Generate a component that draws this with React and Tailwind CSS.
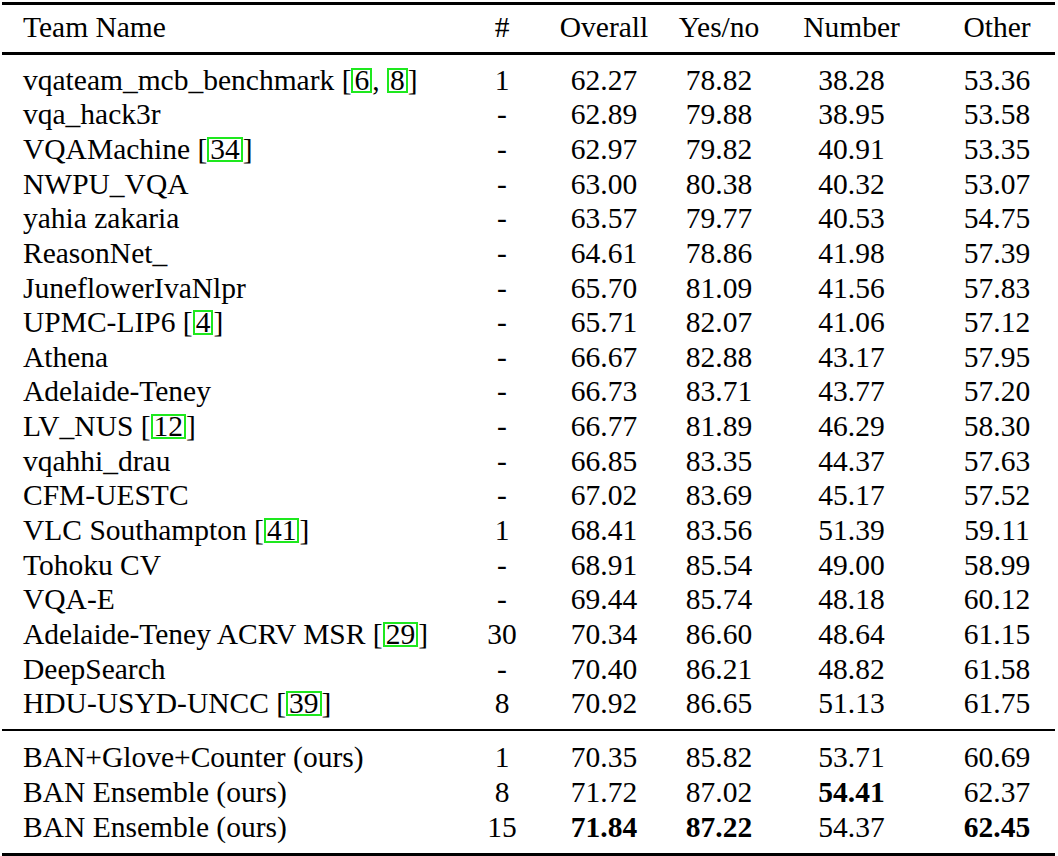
import React from "react";

const rows = [
  { name: "vqateam_mcb_benchmark", cites: ["6", "8"], n: "1", v: ["62.27", "78.82", "38.28", "53.36"] },
  { name: "vqa_hack3r", n: "-", v: ["62.89", "79.88", "38.95", "53.58"] },
  { name: "VQAMachine", cites: ["34"], n: "-", v: ["62.97", "79.82", "40.91", "53.35"] },
  { name: "NWPU_VQA", n: "-", v: ["63.00", "80.38", "40.32", "53.07"] },
  { name: "yahia zakaria", n: "-", v: ["63.57", "79.77", "40.53", "54.75"] },
  { name: "ReasonNet_", n: "-", v: ["64.61", "78.86", "41.98", "57.39"] },
  { name: "JuneflowerIvaNlpr", n: "-", v: ["65.70", "81.09", "41.56", "57.83"] },
  { name: "UPMC-LIP6", cites: ["4"], n: "-", v: ["65.71", "82.07", "41.06", "57.12"] },
  { name: "Athena", n: "-", v: ["66.67", "82.88", "43.17", "57.95"] },
  { name: "Adelaide-Teney", n: "-", v: ["66.73", "83.71", "43.77", "57.20"] },
  { name: "LV_NUS", cites: ["12"], n: "-", v: ["66.77", "81.89", "46.29", "58.30"] },
  { name: "vqahhi_drau", n: "-", v: ["66.85", "83.35", "44.37", "57.63"] },
  { name: "CFM-UESTC", n: "-", v: ["67.02", "83.69", "45.17", "57.52"] },
  { name: "VLC Southampton", cites: ["41"], n: "1", v: ["68.41", "83.56", "51.39", "59.11"] },
  { name: "Tohoku CV", n: "-", v: ["68.91", "85.54", "49.00", "58.99"] },
  { name: "VQA-E", n: "-", v: ["69.44", "85.74", "48.18", "60.12"] },
  { name: "Adelaide-Teney ACRV MSR", cites: ["29"], n: "30", v: ["70.34", "86.60", "48.64", "61.15"] },
  { name: "DeepSearch", n: "-", v: ["70.40", "86.21", "48.82", "61.58"] },
  { name: "HDU-USYD-UNCC", cites: ["39"], n: "8", v: ["70.92", "86.65", "51.13", "61.75"] },
];

const ours = [
  { name: "BAN+Glove+Counter (ours)", n: "1", v: ["70.35", "85.82", "53.71", "60.69"], bold: [] },
  { name: "BAN Ensemble (ours)", n: "8", v: ["71.72", "87.02", "54.41", "62.37"], bold: [2] },
  { name: "BAN Ensemble (ours)", n: "15", v: ["71.84", "87.22", "54.37", "62.45"], bold: [0, 1, 3] },
];

const grid = "grid grid-cols-[468px_64px_140px_90px_175px_116px] items-center";

const Cite = ({ c }) => (
  <span className="inline-block border-2 border-[#1ee81e] leading-[21px] px-[1px]">{c}</span>
);

const Name = ({ row }) => (
  <div className="pl-[21px] whitespace-nowrap">
    {row.name}
    {row.cites && (
      <>
        {" ["}
        {row.cites.map((c, i) => (
          <React.Fragment key={c}>
            {i > 0 && ", "}
            <Cite c={c} />
          </React.Fragment>
        ))}
        {"]"}
      </>
    )}
  </div>
);

const Cell = ({ children, bold }) => (
  <div className={`text-center ${bold ? "font-bold" : ""}`}>{children}</div>
);

const Row = ({ row }) => (
  <div className={`${grid} h-[34.67px]`}>
    <Name row={row} />
    <Cell>{row.n}</Cell>
    {row.v.map((x, i) => (
      <Cell key={i} bold={row.bold && row.bold.includes(i)}>{x}</Cell>
    ))}
  </div>
);

export default function App() {
  return (
    <div className="w-[1058px] h-[856px] bg-white text-black text-[29.5px] leading-none font-['Liberation_Serif'] pt-[2px] pl-[2px]">
      <div className="w-[1053px]">
        <div className="h-[3px] bg-black" />
        <div className={`${grid} h-[47px] pb-[2px]`}>
          <Name row={{ name: "Team Name" }} />
          <Cell>#</Cell>
          <Cell>Overall</Cell>
          <Cell>Yes/no</Cell>
          <Cell>Number</Cell>
          <Cell>Other</Cell>
        </div>
        <div className="h-[3px] bg-black" />
        <div className="pt-[8px] pb-[7.3px]">
          {rows.map((r, i) => (
            <Row key={i} row={r} />
          ))}
        </div>
        <div className="h-[2px] bg-black" />
        <div className="pt-[10px] pb-[8.7px]">
          {ours.map((r, i) => (
            <Row key={i} row={r} />
          ))}
        </div>
        <div className="h-[3px] bg-black" />
      </div>
    </div>
  );
}
